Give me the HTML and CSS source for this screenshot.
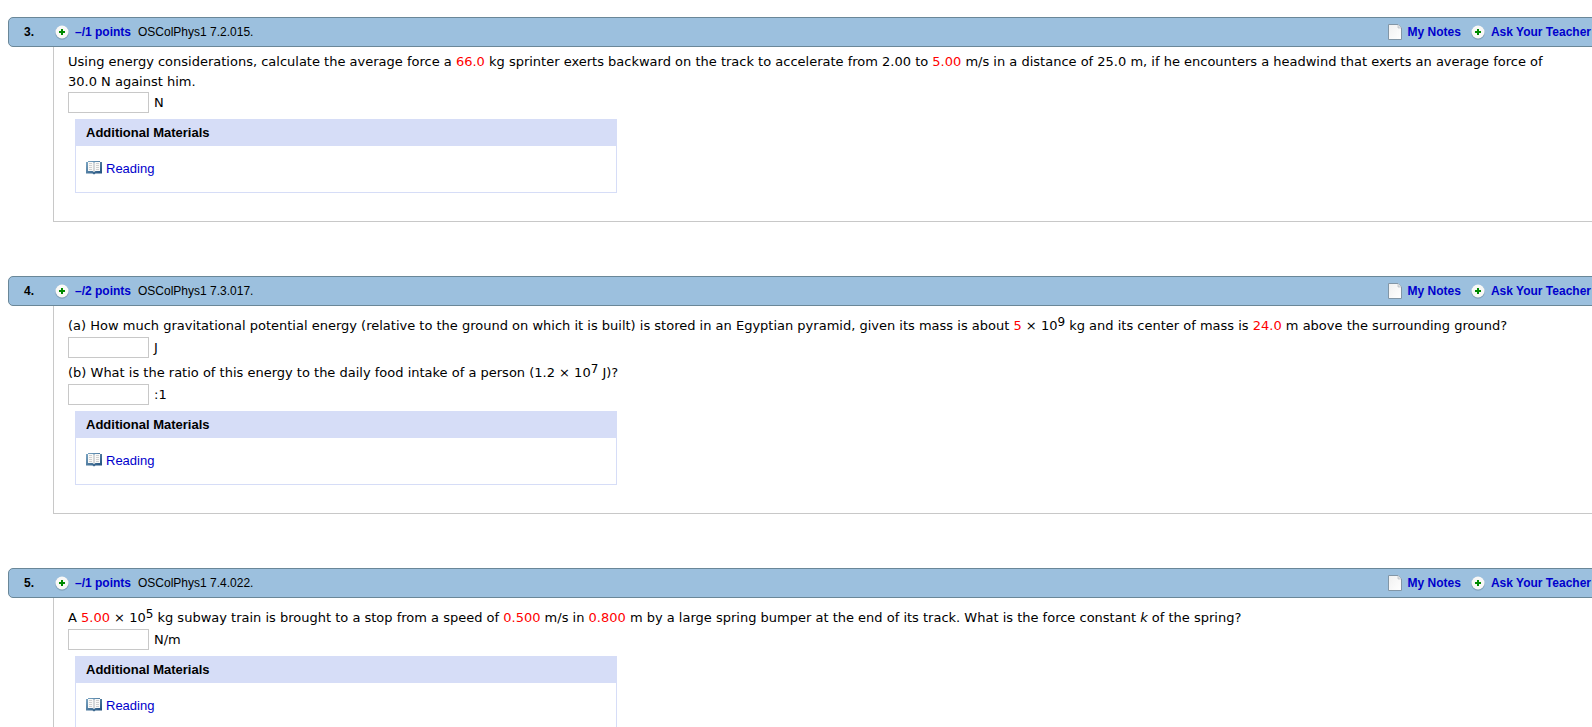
FILE: index.html
```html
<!DOCTYPE html>
<html lang="en">
<head>
    <meta charset="UTF-8">
    <meta name="viewport" content="width=device-width, initial-scale=1.0">
    <title>Assignment</title>
    <link rel="stylesheet" href="styles.css">
</head>
<body>
    <!-- shared icons -->
    <svg class="sprite" aria-hidden="true">
        <defs>
            <linearGradient id="paper" x1="0" y1="0" x2="1" y2="1">
                <stop offset="0" stop-color="#f0f0f0"/>
                <stop offset="1" stop-color="#ffffff"/>
            </linearGradient>
            <linearGradient id="cover" x1="0" y1="0" x2="1" y2="1">
                <stop offset="0" stop-color="#7fa9c6"/>
                <stop offset="1" stop-color="#1d4c78"/>
            </linearGradient>
            <symbol id="icon-plus" viewBox="0 0 14 15">
                <circle cx="7" cy="8" r="6.7" fill="#6f8da3" opacity="0.6"/>
                <circle cx="7" cy="7" r="6.5" fill="#f8f8f6"/>
                <path d="M6 4h2v2h2v2H8v2H6V8H4V6h2z" fill="#008a00"/>
            </symbol>
            <symbol id="icon-note" viewBox="0 0 14 16">
                <path d="M.5.5h9.500l3.500 3.500v11.500H.5z" fill="url(#paper)" stroke="#8296a6"/>
                <path d="M10 .5v3.500h3.500" fill="#e4e4e4" stroke="#a9b4bc" stroke-width="0.6"/>
            </symbol>
            <symbol id="icon-book" viewBox="0 0 16 14">
                <path d="M0 1h2V0h12v1h2v11.500H9.500L8 13.500l-1.500-1H0z" fill="url(#cover)"/>
                <path d="M2 1h5l1 1 1-1h5v9H9.500L8 11l-1.500-1H2z" fill="#f9f9f7"/>
                <path d="M7.500 2h1v8.500h-1z" fill="#b0b6bb"/>
                <path d="M3 2h3v1H3zM3 4h3v1H3zM3 6h3v1H3zM3 8h3v1H3zM10 2h3v1h-3zM10 4h3v1h-3zM10 6h3v1h-3zM10 8h3v1h-3z" fill="#cfcfcf"/>
            </symbol>
        </defs>
    </svg>

    <main class="assignment">
        <section class="question">
            <header class="question-bar">
                <span class="number">3.</span>
                <a href="#" class="points"><svg class="icon-plus"><use href="#icon-plus"/></svg>–/1 points</a>
                <span class="source">OSColPhys1 7.2.015.</span>
                <nav class="tools">
                    <a href="#" class="notes"><svg class="icon-note"><use href="#icon-note"/></svg>My Notes</a>
                    <a href="#" class="ask"><svg class="icon-plus"><use href="#icon-plus"/></svg>Ask Your Teacher</a>
                </nav>
            </header>
            <div class="question-body">
                <p>Using energy considerations, calculate the average force a <span class="value">66.0</span> kg sprinter exerts backward on the track to accelerate from 2.00 to <span class="value">5.00</span> m/s in a distance of 25.0 m, if he encounters a headwind that exerts an average force of 30.0 N against him.</p>
                <div class="answer">
                    <input type="text" id="q3">
                    <label for="q3">N</label>
                </div>
                <div class="materials">
                    <h3>Additional Materials</h3>
                    <a href="#"><svg class="icon-book"><use href="#icon-book"/></svg>Reading</a>
                </div>
            </div>
        </section>

        <section class="question">
            <header class="question-bar">
                <span class="number">4.</span>
                <a href="#" class="points"><svg class="icon-plus"><use href="#icon-plus"/></svg>–/2 points</a>
                <span class="source">OSColPhys1 7.3.017.</span>
                <nav class="tools">
                    <a href="#" class="notes"><svg class="icon-note"><use href="#icon-note"/></svg>My Notes</a>
                    <a href="#" class="ask"><svg class="icon-plus"><use href="#icon-plus"/></svg>Ask Your Teacher</a>
                </nav>
            </header>
            <div class="question-body">
                <p class="has-power">(a) How much gravitational potential energy (relative to the ground on which it is built) is stored in an Egyptian pyramid, given its mass is about <span class="value">5</span> × 10<sup>9</sup> kg and its center of mass is <span class="value">24.0</span> m above the surrounding ground?</p>
                <div class="answer">
                    <input type="text" id="q4a">
                    <label for="q4a">J</label>
                </div>
                <p class="has-power">(b) What is the ratio of this energy to the daily food intake of a person (1.2 × 10<sup>7</sup> J)?</p>
                <div class="answer">
                    <input type="text" id="q4b">
                    <label for="q4b">:1</label>
                </div>
                <div class="materials">
                    <h3>Additional Materials</h3>
                    <a href="#"><svg class="icon-book"><use href="#icon-book"/></svg>Reading</a>
                </div>
            </div>
        </section>

        <section class="question">
            <header class="question-bar">
                <span class="number">5.</span>
                <a href="#" class="points"><svg class="icon-plus"><use href="#icon-plus"/></svg>–/1 points</a>
                <span class="source">OSColPhys1 7.4.022.</span>
                <nav class="tools">
                    <a href="#" class="notes"><svg class="icon-note"><use href="#icon-note"/></svg>My Notes</a>
                    <a href="#" class="ask"><svg class="icon-plus"><use href="#icon-plus"/></svg>Ask Your Teacher</a>
                </nav>
            </header>
            <div class="question-body">
                <p class="has-power">A <span class="value">5.00</span> × 10<sup>5</sup> kg subway train is brought to a stop from a speed of <span class="value">0.500</span> m/s in <span class="value">0.800</span> m by a large spring bumper at the end of its track. What is the force constant <i>k</i> of the spring?</p>
                <div class="answer">
                    <input type="text" id="q5">
                    <label for="q5">N/m</label>
                </div>
                <div class="materials">
                    <h3>Additional Materials</h3>
                    <a href="#"><svg class="icon-book"><use href="#icon-book"/></svg>Reading</a>
                </div>
            </div>
        </section>
    </main>
</body>
</html>
```
FILE: styles.css
```css
* {
    box-sizing: border-box;
}
body {
    margin: 0;
    background-color: #fff;
    color: #000;
    font-family: Verdana, "DejaVu Sans", sans-serif;
    font-size: 13px;
    line-height: 20px;
}
a {
    color: #0000cc;
    text-decoration: none;
}
p {
    margin: 0;
}
.sprite {
    position: absolute;
    width: 0;
    height: 0;
}
.assignment {
    padding: 17px 0 0 8px;
    overflow: hidden;
}
.question {
    margin-right: -12px;
    margin-bottom: 54px;
}

/* blue title bar */
.question-bar {
    display: flex;
    align-items: center;
    height: 30px;
    padding: 0 12px 0 15px;
    background-color: #9cc0de;
    border: 1px solid #6a8798;
    border-radius: 5px;
    font-family: Arial, "Liberation Sans", sans-serif;
    font-size: 12px;
}
.number {
    width: 31px;
    font-weight: bold;
}
.points, .notes, .ask {
    display: flex;
    align-items: center;
    font-weight: bold;
}
.source {
    margin-left: 7px;
}
.tools {
    display: flex;
    gap: 10px;
    margin-left: auto;
}
.icon-plus {
    width: 14px;
    height: 15px;
    margin-right: 6px;
}
.icon-note {
    width: 14px;
    height: 16px;
    margin-right: 6px;
}

/* question text and answer boxes */
.question-body {
    margin-left: 45px;
    padding: 5px 36px 28px 14px;
    border: 1px solid #c8c8c8;
    border-top: none;
}
.has-power {
    padding: 5px 0 1px;
}
.value {
    color: #ff0000;
}
sup {
    font-size: 12px;
    line-height: 0;
    vertical-align: 4px;
}
.answer {
    display: flex;
    align-items: center;
    gap: 5px;
}
.answer input {
    width: 81px;
    height: 21px;
    padding: 1px 3px;
    border: 1px solid #c8c8c8;
    font: inherit;
}

/* additional materials box */
.materials {
    max-width: 542px;
    margin: 6px 0 0 7px;
    border: 1px solid #d6ddf7;
    font-family: Arial, "Liberation Sans", sans-serif;
}
.materials h3 {
    margin: 0;
    padding: 3px 10px;
    background-color: #d6ddf7;
    font-size: 13px;
}
.materials a {
    display: flex;
    align-items: center;
    padding: 13px 10px;
}
.icon-book {
    width: 16px;
    height: 14px;
    margin: 0 4px 3px 0;
}
```
